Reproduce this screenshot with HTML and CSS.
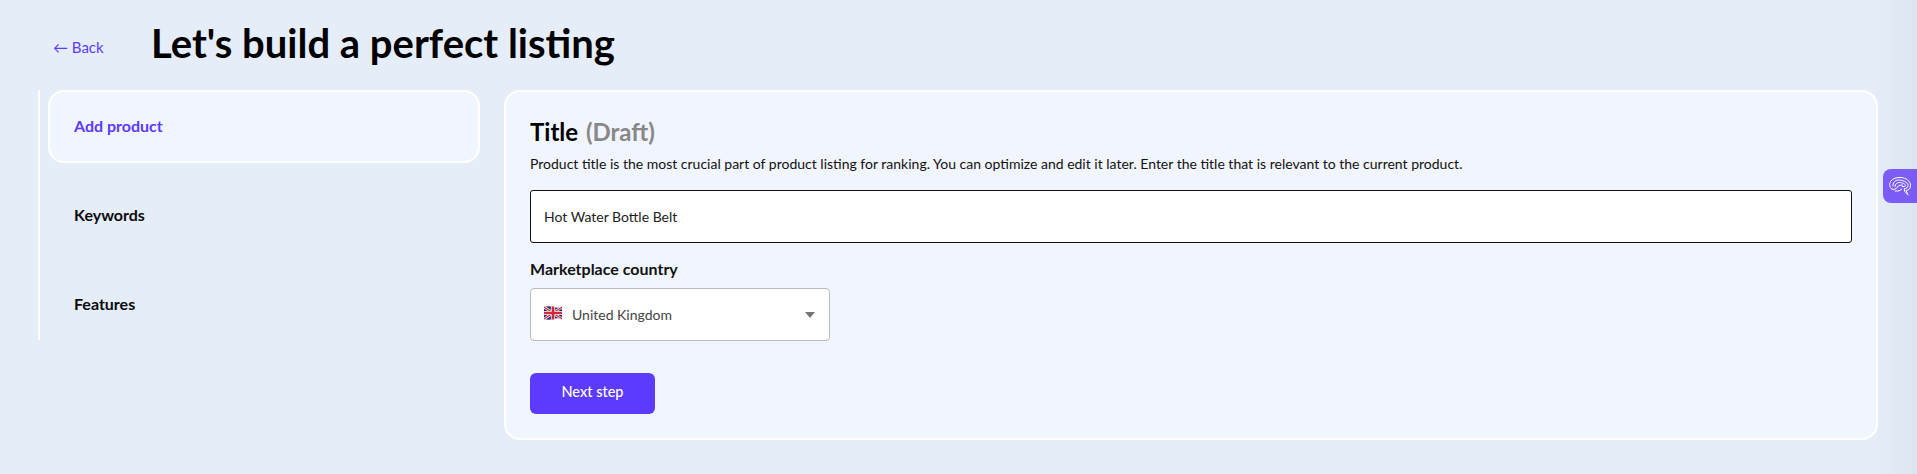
FILE: index.html
```html
<!DOCTYPE html>
<html lang="en">
<head>
    <meta charset="UTF-8">
    <title>Let's build a perfect listing</title>
    <link rel="stylesheet" href="styles.css">
</head>
<body>
    <div class="page">
        <div class="top-bar">
            <a class="back-link" href="#">&larr; Back</a>
            <h1 class="page-title">Let's build a perfect listing</h1>
        </div>
        <div class="content">
            <ul class="steps">
                <li class="step step-active">Add product</li>
                <li class="step">Keywords</li>
                <li class="step">Features</li>
            </ul>
            <div class="card">
                <h2 class="card-title">Title <span class="draft">(Draft)</span></h2>
                <p class="card-text">Product title is the most crucial part of product listing for ranking. You can optimize and edit it later. Enter the title that is relevant to the current product.</p>
                <div class="title-input">Hot Water Bottle Belt</div>
                <label class="field-label">Marketplace country</label>
                <div class="country-select">
                    <svg class="flag" viewBox="0 0 60 46" width="18" height="14">
                        <path d="M0 3Q15 -2 30 3T60 3V43Q45 38 30 43T0 43Z" fill="#27306e"/>
                        <path d="M0 3L60 43M60 3L0 43" stroke="#fff" stroke-width="9"/>
                        <path d="M0 3L60 43M60 3L0 43" stroke="#d0283c" stroke-width="4"/>
                        <path d="M30 1V45M0 23H60" stroke="#fff" stroke-width="14"/>
                        <path d="M30 1V45M0 23H60" stroke="#d0283c" stroke-width="9"/>
                    </svg>
                    <span class="country-name">United Kingdom</span>
                    <span class="caret"></span>
                </div>
                <button class="next-btn">Next step</button>
            </div>
        </div>
    </div>
    <div class="side-tab">
        <svg viewBox="0 0 24 24" width="24" height="24" fill="none" stroke="#fff" stroke-width="1" stroke-linecap="round">
            <path d="M4 15C1.500 13.500 1 10 2.500 7.500C4.500 4.500 9 3 13 3.500C18 4 22.500 7 22.500 11.500C22.500 14.500 20.500 16.500 18 16.500L20 21"/>
            <path d="M5 12C4.500 9 7 6 10.500 6C14.500 6 20 8 20 11.500C20 13.500 18.500 14.500 16.500 14.500C16 16.500 17 18 18.500 19.500"/>
            <path d="M7 12.500C7 10 9 8.500 11.500 8.500C14.500 8.500 17.500 10 17.500 11.800C17.500 12.800 15.500 12.800 14 12.300"/>
            <path d="M3.500 15C6 16 8.500 15 9.500 13C10.500 11 13 11 14.500 11M7 17C10 17.500 12.500 16.500 14 15"/>
        </svg>
    </div>
</body>
</html>
```
FILE: styles.css
```css
*{
    padding:0;
    margin:0;
    box-sizing:border-box;
}
body{
    height:474px;
    overflow:hidden;
    background:linear-gradient(90deg,#e5edf8 0,#e5edf8 1870px,#dde5f0 100%);
    font-family:Lato,"Liberation Sans",sans-serif;
    color:#000;
}
.page{
    width:1878px;
    padding:18px 0 0 38px;
}
.top-bar{
    display:flex;
    align-items:center;
    height:50px;
    margin-bottom:22px;
}
.back-link{
    width:113px;
    padding-left:15px;
    font-size:15px;
    color:#5c3bfe;
    text-decoration:none;
    margin-top:7px;
}
.page-title{
    font-size:40px;
    font-weight:700;
    line-height:50px;
}
.content{
    display:flex;
    gap:24px;
    align-items:flex-start;
}
.steps{
    list-style:none;
    width:442px;
    height:250px;
    border-left:2px solid #fff;
    padding-left:8px;
    flex-shrink:0;
}
.step{
    height:73px;
    padding:0 26px;
    display:flex;
    align-items:center;
    font-size:16px;
    font-weight:700;
    margin-bottom:16px;
    padding-bottom:2px;
    color:#0b0b0b;
}
.step-active{
    background:#f1f5fd;
    border:2px solid #fff;
    border-radius:16px;
    color:#5c3bfe;
    padding-left:24px;
}
.card{
    flex:1;
    height:350px;
    background:#f1f5fd;
    border:2px solid #fff;
    border-radius:16px;
    padding:25px 24px 0;
}
.card-title{
    font-size:24px;
    font-weight:700;
    line-height:30px;
}
.draft{
    color:#888;
    margin-left:2px;
}
.card-text{
    font-size:14px;
    line-height:20px;
    margin-top:7px;
    color:#111;
}
.title-input{
    height:53px;
    margin-top:16px;
    padding:0 13px;
    display:flex;
    align-items:center;
    background:#fff;
    border:1px solid #111;
    border-radius:3px;
    font-size:14px;
    color:#222;
}
.field-label{
    display:block;
    font-size:16px;
    font-weight:700;
    line-height:20px;
    margin-top:16px;
    color:#111;
}
.country-select{
    width:300px;
    height:53px;
    margin-top:9px;
    padding:0 14px 0 13px;
    display:flex;
    align-items:center;
    background:#fff;
    border:1px solid #bbb;
    border-radius:4px;
    font-size:14px;
    color:#444;
}
.flag{
    margin-right:10px;
    margin-top:-3px;
}
.country-name{
    flex:1;
}
.caret{
    width:0;
    height:0;
    border-left:5px solid transparent;
    border-right:5px solid transparent;
    border-top:6px solid #777;
}
.next-btn{
    display:block;
    width:125px;
    height:41px;
    margin-top:32px;
    padding-bottom:4px;
    background:#5c3bfe;
    color:#fff;
    border:none;
    border-radius:6px;
    font-family:inherit;
    font-size:14.5px;
    font-weight:500;
}
.side-tab{
    position:fixed;
    top:169px;
    right:0;
    width:34px;
    height:34px;
    background:#7b5cf6;
    border-radius:8px 0 0 8px;
    display:flex;
    align-items:center;
    justify-content:center;
}
```
